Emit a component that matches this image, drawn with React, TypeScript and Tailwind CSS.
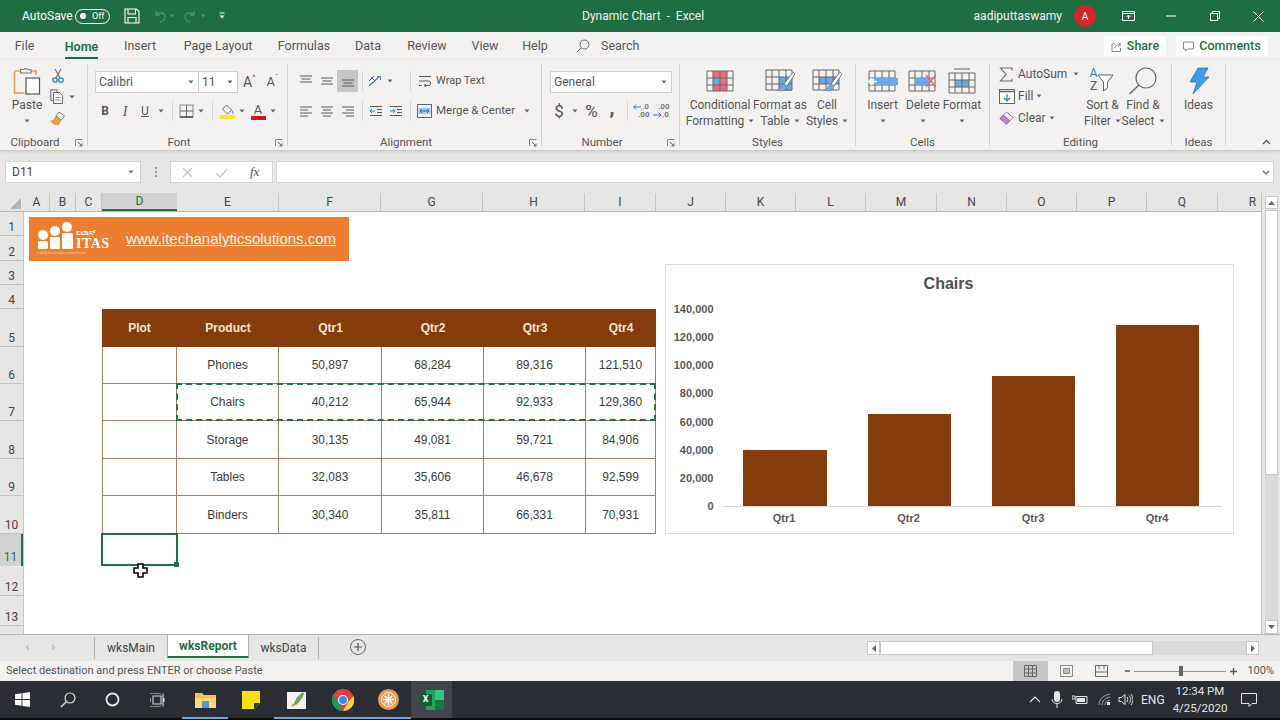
import React from "react";

type Kids = { children?: React.ReactNode };
const S = ({ w, h, children, className }: { w: number; h: number; children?: React.ReactNode; className?: string }) => (
  <svg width={w} height={h} viewBox={`0 0 ${w} ${h}`} fill="none" className={className}>{children}</svg>
);
const G = "#5a5a5a";
const Caret = ({ c = "#666" }: { c?: string }) => <S w={6} h={4}><path d="M0.5 0.5h5L3 3.5z" fill={c} /></S>;
const Cell = ({ w, children }: { w: number; children?: React.ReactNode }) => (
  <div style={{ width: w }} className="flex-none h-full flex items-center justify-center">{children}</div>
);
const Sep = ({ w = 9 }: { w?: number }) => (
  <div style={{ width: w }} className="flex-none h-full flex items-center justify-center"><div className="w-px h-[20px] bg-[#d4d4d4]" /></div>
);
const Launcher = () => (
  <S w={8} h={8}><path d="M0.5 7V0.5H7.5" stroke="#8a8a8a" /><path d="M3 3l4 4M7 4.5V7H4.5" stroke="#666" /></S>
);
const Group = ({ w, label, launcher, children }: Kids & { w: number; label: string; launcher?: boolean }) => (
  <div style={{ width: w }} className="flex-none h-[82px] mt-[4px] border-r border-[#cfcfcf] flex flex-col">
    <div className="h-[74px] flex-none min-h-0">{children}</div>
    <div className={launcher ? "relative h-[8px] flex-none flex items-center justify-center text-[11.500px] leading-[13px] text-[#555] pr-[17px]" : "relative h-[8px] flex-none flex items-center justify-center text-[11.500px] leading-[13px] text-[#555]"}>
      <span>{label}</span>
      {launcher && <span className="absolute right-[4px] top-[1px] flex"><Launcher /></span>}
    </div>
  </div>
);
const Big = ({ w, icon, l1, l2, caret }: { w: number; icon: React.ReactNode; l1: string; l2?: string; caret?: boolean }) => (
  <div style={{ width: w }} className="flex-none flex flex-col items-center">
    <div className="h-[34px] flex items-center justify-center">{icon}</div>
    <div className="h-[15px] leading-[15px] whitespace-nowrap">{l1}</div>
    <div className="h-[15px] flex items-center gap-[4px] whitespace-nowrap leading-[14px]">
      {l2 && <span>{l2}</span>}
      {caret && <Caret />}
    </div>
  </div>
);

/* ribbon drawings */
const PasteI = () => (
  <S w={28} h={30}>
    <path d="M8 5H2.500a1 1 0 0 0-1 1V27h10" stroke="#e2a24f" strokeWidth="1.600" />
    <path d="M18 5h5v4" stroke="#e2a24f" strokeWidth="1.600" />
    <path d="M7.500 7V3.500h3.500a2 2 0 0 1 3.500 0h3.500V7z" stroke="#777" fill="#f3f2f1" strokeWidth="1.100" />
    <rect x="13" y="12" width="13.500" height="16" fill="#fff" stroke="#555" strokeWidth="1.200" />
  </S>
);
const CutI = () => (
  <S w={12} h={15}>
    <path d="M3 1l5 9M9 1L4 10" stroke="#666" strokeWidth="1.100" />
    <circle cx="3" cy="12" r="2.200" stroke="#2f7cc4" strokeWidth="1.300" />
    <circle cx="9" cy="12" r="2.200" stroke="#2f7cc4" strokeWidth="1.300" />
  </S>
);
const CopyI = () => (
  <S w={15} h={15}>
    <path d="M3 11.500H.8V.8H7V3" stroke="#666" />
    <path d="M3.500 3.500h6l3 3v8h-9z" stroke="#666" fill="#f7f7f7" />
    <path d="M5.500 8.500h5M5.500 11h5" stroke="#888" />
  </S>
);
const PainterI = () => (
  <S w={16} h={15}>
    <path d="M9 1l5.500 4-3 4-5.500-4z" fill="#fff" stroke="#777" />
    <path d="M6 5l5 4-2.500 5C5 14 2 12 .8 10c2 0 4-1 5.200-5z" fill="#e7a14b" stroke="#c98530" strokeWidth=".7" />
  </S>
);
const Lines = ({ kind, y = 2 }: { kind: "l" | "c" | "r"; y?: number }) => {
  const short = kind === "l" ? "M1 XH9" : kind === "c" ? "M3 XH11" : "M5 XH13";
  return (
    <S w={14} h={13}>
      <path d={`M1 ${y}H13`} stroke={G} />
      <path d={short.replace("X", String(y + 3))} stroke={G} />
      <path d={`M1 ${y + 6}H13`} stroke={G} />
      <path d={short.replace("X", String(y + 9))} stroke={G} />
    </S>
  );
};
const VA = ({ at }: { at: number }) => (
  <S w={14} h={14}>
    <path d={`M1 ${at}H13M2.500 ${at + 3}H11.500M1 ${at + 6}H13`} stroke={G} />
  </S>
);
const OrientI = () => (
  <S w={16} h={14}>
    <path d="M1 12L11 3" stroke="#2f7cc4" strokeWidth="1.200" />
    <path d="M9 2.500h3.500V6" stroke="#2f7cc4" />
    <path d="M1 7l5-5M3 3l4 4" stroke={G} />
  </S>
);
const Indent = ({ out }: { out?: boolean }) => (
  <S w={14} h={12}>
    <path d="M1 1.500H13M8 4.500H13M8 7.500H13M1 10.500H13" stroke={G} />
    <path d={out ? "M6 6H1M3 4L1 6l2 2" : "M1 6h5M4 4l2 2-2 2"} stroke="#2f7cc4" />
  </S>
);
const BordersI = () => (
  <S w={15} h={14}>
    <rect x="1" y="1" width="13" height="12" stroke="#888" />
    <path d="M7.500 1v12M1 7h13" stroke="#666" />
    <path d="M1 13h13" stroke="#444" strokeWidth="1.400" />
  </S>
);
const FillI = () => (
  <div className="flex flex-col items-center">
    <S w={14} h={11}><path d="M6.500 1l5 5-4 4-5-5z" fill="#fff" stroke="#666" /><path d="M12 6.500c1 1.500 1.500 2.500.5 3.500" stroke="#2f7cc4" /></S>
    <div className="w-[15px] h-[4px] bg-[#f4ea2a]" />
  </div>
);
const WrapI = () => (
  <S w={14} h={14}>
    <path d="M1 2.500H13M1 7H10.500a2 2 0 0 1 0 4.500H6" stroke={G} />
    <path d="M8 10L6 11.500 8 13" stroke="#2f7cc4" />
    <path d="M1 11.500H4" stroke={G} />
  </S>
);
const MergeI = () => (
  <S w={15} h={14}>
    <rect x=".5" y=".5" width="14" height="13" stroke="#4a6a8a" />
    <rect x="1.500" y="4" width="12" height="6" fill="#9fc8ee" />
    <path d="M3 7h9M5 5L3 7l2 2M10 5l2 2-2 2" stroke="#2f6fb0" />
  </S>
);
const IncDec = ({ dec }: { dec?: boolean }) => (
  <div className="relative w-[18px] h-[16px] text-[8px] leading-[8px] text-[#777] font-bold">
    <span className="absolute left-[0px] top-[0px] flex">
      {dec ? <span className="pl-[6px]">.00</span> : <S w={18} h={8}><path d="M9 4H1.500M4 1.500L1.500 4 4 6.500" stroke="#2f7cc4" /></S>}
    </span>
    {!dec && <span className="absolute left-[10px] top-[0px]">.0</span>}
    <span className="absolute left-[0px] top-[8px] flex">
      {dec ? <S w={18} h={8}><path d="M1 4h8M6.500 1.500L9 4 6.500 6.500" stroke="#2f7cc4" /></S> : <span className="pl-[6px]">.00</span>}
    </span>
    {dec && <span className="absolute left-[10px] top-[8px]">.0</span>}
  </div>
);
const TableLines = () => <path d="M1 1h26v20H1zM1 8h26M1 15h26M7 1v20M14 1v20M21 1v20" stroke="#666" fill="none" />;
const CondI = () => (
  <S w={28} h={22}>
    <rect x="7" y="1" width="14" height="7" fill="#f4687a" />
    <rect x="7" y="15" width="14" height="6" fill="#f4687a" />
    <rect x="14" y="8" width="7" height="7" fill="#f4687a" />
    <rect x="7" y="8" width="7" height="7" fill="#6aa9e6" />
    <TableLines />
  </S>
);
const Brush = () => (
  <>
    <path d="M28 3L19 15l3 2 8-12z" fill="#fff" stroke="#7a7a7a" />
    <path d="M19 15c-3 1-3 5-7 6 4 2 9 1 10-4z" fill="#79a9d9" stroke="#5a87b5" strokeWidth=".6" />
  </>
);
const FormatTableI = () => (
  <S w={31} h={24}>
    <rect x="14" y="8" width="13" height="14" fill="#6aa9e6" />
    <TableLines />
    <Brush />
  </S>
);
const CellStylesI = () => (
  <S w={31} h={24}>
    <rect x="7" y="8" width="20" height="7" fill="#6aa9e6" />
    <TableLines />
    <Brush />
  </S>
);
const InsertI = () => (
  <S w={30} h={22}>
    <TableLines />
    <rect x="6" y="8" width="24" height="7" fill="#6aa9e6" />
    <path d="M9 11.500H1M4 8L.8 11.500 4 15" stroke="#fff" strokeWidth="1.500" />
  </S>
);
const DeleteI = () => (
  <S w={30} h={22}>
    <TableLines />
    <rect x="7" y="8" width="14" height="7" fill="#6aa9e6" />
    <path d="M18 5l10 12M28 5L18 17" stroke="#e5616b" strokeWidth="1.300" />
  </S>
);
const FormatI = () => (
  <S w={28} h={26}>
    <path d="M6 1h16" stroke="#666" />
    <g transform="translate(0 4)"><rect x="7" y="8" width="14" height="7" fill="#6aa9e6" /><TableLines /></g>
  </S>
);
const SigmaI = () => <S w={14} h={15}><path d="M13 3.500V1H1.500L7 7.500 1.500 14H13v-2.500" stroke="#666" strokeWidth="1.100" /></S>;
const FillDownI = () => (
  <S w={16} h={15}>
    <rect x=".5" y=".5" width="15" height="14" fill="#fff" stroke="#666" />
    <path d="M.5 2.500h15" stroke="#666" strokeWidth="1.500" />
    <path d="M8 5v7M5 9l3 3 3-3" stroke="#2f7cc4" strokeWidth="1.200" />
  </S>
);
const EraserI = () => (
  <S w={15} h={14}>
    <path d="M1 7.500L7.500 1 14 6.500 7.500 13z" fill="#fff" stroke="#a65fb5" />
    <path d="M1 7.500L4.500 4 11 10l-3.500 3z" fill="#c77fd6" stroke="#a65fb5" />
  </S>
);
const SortI = () => (
  <div className="flex items-start">
    <div className="flex flex-col items-center text-[12px] leading-[13px]">
      <span className="text-[#2f7cc4]">A</span>
      <span className="text-[#555]">Z</span>
    </div>
    <S w={18} h={22} className="mt-[6px]"><path d="M1 2h15l-5.500 7v6l-4 3V9z" stroke="#666" fill="#fff" /></S>
  </div>
);
const FindI = () => (
  <S w={30} h={30}>
    <circle cx="18" cy="12" r="10" stroke="#666" strokeWidth="1.200" />
    <path d="M11 19L1.500 28" stroke="#666" strokeWidth="1.300" />
  </S>
);
const BoltI = () => (
  <S w={22} h={28}>
    <path d="M10 1h10l-5 9h6L5 27l4-12H2z" fill="#3f9ae8" stroke="#2a78c0" strokeWidth=".8" />
  </S>
);

const columns: [string, number, boolean?][] = [
  ["A", 26], ["B", 26], ["C", 26], ["D", 75, true], ["E", 102], ["F", 102], ["G", 102], ["H", 102], ["I", 71],
  ["J", 70], ["K", 70], ["L", 70], ["M", 71], ["N", 70], ["O", 70], ["P", 70], ["Q", 71], ["R", 70],
];
const rowsH: [string, number, boolean?][] = [
  ["1", 24], ["2", 25], ["3", 24], ["4", 24], ["5", 38], ["6", 37], ["7", 37], ["8", 38], ["9", 37], ["10", 38],
  ["11", 32, true], ["12", 30], ["13", 30],
];
const tableRows: { h: number; v: string[] }[] = [
  { h: 37, v: ["", "Phones", "50,897", "68,284", "89,316", "121,510"] },
  { h: 37, v: ["", "Chairs", "40,212", "65,944", "92,933", "129,360"] },
  { h: 38, v: ["", "Storage", "30,135", "49,081", "59,721", "84,906"] },
  { h: 37, v: ["", "Tables", "32,083", "35,606", "46,678", "92,599"] },
  { h: 38, v: ["", "Binders", "30,340", "35,811", "66,331", "70,931"] },
];
const tabs: [string, number, boolean?][] = [
  ["File", 49], ["Home", 65, true], ["Insert", 52], ["Page Layout", 104], ["Formulas", 68], ["Data", 60], ["Review", 58], ["View", 58], ["Help", 42],
];

const Chart = () => {
  const bars = [
    { x: 78, w: 84, y: 186, l: "Qtr1", c: 119 },
    { x: 203, w: 83, y: 150, l: "Qtr2", c: 243.500 },
    { x: 327, w: 83, y: 112, l: "Qtr3", c: 368 },
    { x: 451, w: 83, y: 61, l: "Qtr4", c: 492 },
  ];
  const ticks = ["140,000", "120,000", "100,000", "80,000", "60,000", "40,000", "20,000", "0"];
  return (
    <svg width="569" height="270" viewBox="0 0 569 270" className="block" style={{ fontFamily: "'Liberation Sans', Arial, sans-serif" }}>
      <rect x=".5" y=".5" width="568" height="269" fill="#fff" stroke="#dedede" />
      <text x="283.500" y="25" textAnchor="middle" fontSize="16" fontWeight="700" fill="#505050">Chairs</text>
      {ticks.map((t, i) => (
        <text key={t} x="48.500" y={49 + i * 28.140} textAnchor="end" fontSize="11" fontWeight="700" fill="#595959">{t}</text>
      ))}
      <path d="M58 242.500H557" stroke="#d9d9d9" />
      {bars.map((b) => (
        <g key={b.l}>
          <rect x={b.x} y={b.y} width={b.w} height={242 - b.y} fill="#843c0c" />
          <text x={b.c} y="258" textAnchor="middle" fontSize="11" fontWeight="700" fill="#595959">{b.l}</text>
        </g>
      ))}
    </svg>
  );
};

export default function App() {
  return (
    <div className="w-[1280px] h-[720px] overflow-hidden flex flex-col bg-[#f3f2f1] font-['Roboto',sans-serif] text-[12px] text-[#444]">
      {/* Title bar */}
      <div className="h-[32px] flex-none bg-[#1f6e43] flex items-center text-white">
        <div className="w-[22px] flex-none" />
        <span className="text-[12px] w-[53px] flex-none whitespace-nowrap">AutoSave</span>
        <div className="w-[35px] h-[15px] flex-none rounded-full border border-white flex items-center pl-[4px] gap-[6px]">
          <span className="w-[6px] h-[6px] rounded-full bg-white" />
          <span className="text-[9px] leading-none">Off</span>
        </div>
        <div className="ml-[14px] flex-none flex">
          <S w={16} h={16}><path d="M1 1h11.500L15 3.500V15H1zM4 1v5h7.500V1M4 15V9.500h8V15" stroke="#fff" strokeWidth="1.100" /></S>
        </div>
        <div className="ml-[13px] flex-none flex items-center gap-[3px] opacity-40">
          <S w={13} h={13}><path d="M3 1v4h4M3 5c2-3 9-3 9 2 0 3-3 5-5 5" stroke="#9fc5ae" strokeWidth="1.300" /></S>
          <Caret c="#9fc5ae" />
        </div>
        <div className="ml-[9px] flex-none flex items-center gap-[3px] opacity-40">
          <S w={13} h={13}><path d="M10 1v4H6M10 5C8 2 1 2 1 7c0 3 3 5 5 5" stroke="#9fc5ae" strokeWidth="1.300" /></S>
          <Caret c="#9fc5ae" />
        </div>
        <div className="ml-[13px] flex-none flex">
          <S w={6} h={8}><path d="M.5 1h5" stroke="#fff" /><path d="M.5 3.500h5L3 6.500z" fill="#fff" /></S>
        </div>
        <div className="w-[357px] flex-none" />
        <span className="w-[116px] flex-none text-center whitespace-pre text-[#f2f2f2]">Dynamic Chart  -  Excel</span>
        <div className="flex-1" />
        <span className="whitespace-nowrap text-[12px] text-[#f2f2f2] -ml-[6px]">aadiputtaswamy</span>
        <div className="ml-[12px] w-[22px] h-[22px] rounded-full bg-[#d1262c] flex items-center justify-center text-[10px]">A</div>
        <div className="ml-[26px] flex">
          <S w={13} h={10}><path d="M.5.500h12v9H.5zM.5 2.500h12M6.500 8V4M4.500 6l2-2 2 2" stroke="#fff" /></S>
        </div>
        <div className="ml-[31px] flex"><S w={10} h={2}><path d="M0 1h10" stroke="#fff" /></S></div>
        <div className="ml-[34px] flex"><S w={10} h={10}><path d="M.5 2.500h7v7h-7zM2.500 2.500V.5h7v7h-2" stroke="#fff" /></S></div>
        <div className="ml-[33px] mr-[16px] flex"><S w={11} h={11}><path d="M.5.500l10 10M10.500.5L.5 10.500" stroke="#fff" /></S></div>
      </div>

      {/* Tabs */}
      <div className="h-[28px] flex-none flex items-center text-[12.500px] text-[#555]">
        {tabs.map(([t, w, on]) => (
          <div key={t} style={{ width: w }} className="flex-none h-full flex items-center justify-center relative">
            <span className={on ? "font-semibold text-[#1f6e43] border-b-[2.500px] border-[#1f6e43] h-[24px] mt-[2px] leading-[24px]" : ""}>{t}</span>
          </div>
        ))}
        <div className="ml-[20px] flex"><S w={14} h={14}><circle cx="8.500" cy="5.500" r="4.500" stroke="#666" /><path d="M5 9L1 13" stroke="#666" /></S></div>
        <span className="ml-[11px]">Search</span>
        <div className="flex-1" />
        <div className="h-[20px] w-[62px] bg-white flex items-center justify-center gap-[5px] text-[#1f6e43] font-medium">
          <S w={11} h={11}><path d="M4 3H1v7.500h8.500V7M3.500 7.500C4 5 6 3.500 9 3.500M7 1l3 2.500L7 6" stroke="#888" /></S>
          <span>Share</span>
        </div>
        <div className="ml-[10px] mr-[12px] h-[20px] w-[92px] bg-white flex items-center justify-center gap-[5px] text-[#1f6e43] font-medium">
          <S w={11} h={11}><path d="M.5 1h10v7H4.500L2.500 10V8h-2z" stroke="#888" /></S>
          <span>Comments</span>
        </div>
      </div>

      {/* Ribbon */}
      <div className="h-[90px] flex-none flex items-start shadow-[0_1px_3px_rgba(0,0,0,0.18)] relative z-10 text-[12px] text-[#555]">
        <Group w={88} label="Clipboard" launcher>
          <div className="flex h-full pl-[5px]">
            <Big w={44} icon={<PasteI />} l1="Paste" caret />
            <div className="flex flex-col pl-[1px]">
              <div className="h-[22px] flex items-center pl-[2px]"><CutI /></div>
              <div className="h-[21px] flex items-center gap-[4px]"><CopyI /><Caret /></div>
              <div className="h-[22px] flex items-center"><PainterI /></div>
            </div>
          </div>
        </Group>

        <Group w={200} label="Font" launcher>
          <div className="pl-[7px] pt-[7px]">
            <div className="flex h-[22px]">
              <div className="w-[104px] border border-[#cfcfcf] bg-white flex items-center justify-between pl-[3px] pr-[4px]"><span className="text-[12px]">Calibri</span><Caret /></div>
              <div className="w-[40px] -ml-px border border-[#cfcfcf] bg-white flex items-center justify-between pl-[3px] pr-[4px]"><span>11</span><Caret /></div>
              <div className="flex items-center ml-[5px] gap-[11px] text-[14px]">
                <span className="flex items-start">A<span className="text-[8px] leading-[12px]">^</span></span>
                <span className="flex items-start text-[13px]">A<span className="text-[8px] leading-[12px]">ˇ</span></span>
              </div>
            </div>
            <div className="flex h-[22px] mt-[7px] font-['Liberation_Serif',serif]">
              <Cell w={20}><span className="font-['Roboto',sans-serif] font-bold text-[12px]">B</span></Cell>
              <Cell w={20}><span className="italic text-[14px]">I</span></Cell>
              <Cell w={20}><span className="font-['Roboto',sans-serif] underline text-[12px]">U</span></Cell>
              <Cell w={12}><Caret /></Cell>
              <Sep w={11} />
              <Cell w={16}><BordersI /></Cell>
              <Cell w={14}><Caret /></Cell>
              <Sep w={9} />
              <Cell w={20}><FillI /></Cell>
              <Cell w={10}><Caret /></Cell>
              <Cell w={22}>
                <div className="flex flex-col items-center font-['Roboto',sans-serif] text-[13px] leading-[13px]">
                  <span>A</span><span className="w-[15px] h-[4px] bg-[#d8121d]" />
                </div>
              </Cell>
              <Cell w={8}><Caret /></Cell>
            </div>
          </div>
        </Group>

        <Group w={254} label="Alignment" launcher>
          <div className="pl-[7px] pt-[6px]">
            <div className="flex h-[22px]">
              <Cell w={21}><VA at={2} /></Cell>
              <Cell w={21}><VA at={4} /></Cell>
              <Cell w={21}><div className="w-[21px] h-[22px] bg-[#c6c6c6] flex items-center justify-center"><VA at={6} /></div></Cell>
              <Sep w={8} />
              <Cell w={20}><OrientI /></Cell>
              <Cell w={8}><Caret /></Cell>
              <div className="w-[12px]" />
              <Sep w={8} />
              <Cell w={21}><WrapI /></Cell>
              <span className="self-center ml-[1px] text-[11px] whitespace-nowrap">Wrap Text</span>
            </div>
            <div className="flex h-[22px] mt-[8px]">
              <Cell w={21}><Lines kind="l" /></Cell>
              <Cell w={21}><Lines kind="c" /></Cell>
              <Cell w={21}><Lines kind="r" /></Cell>
              <Sep w={8} />
              <Cell w={20}><Indent out /></Cell>
              <Cell w={20}><Indent /></Cell>
              <Sep w={8} />
              <Cell w={21}><MergeI /></Cell>
              <span className="self-center ml-[1px] text-[11.500px] whitespace-nowrap">Merge &amp; Center</span>
              <span className="self-center ml-[9px] flex"><Caret /></span>
            </div>
          </div>
        </Group>

        <Group w={138} label="Number" launcher>
          <div className="pl-[8px] pt-[7px]">
            <div className="w-[122px] h-[22px] border border-[#cfcfcf] bg-white flex items-center justify-between pl-[3px] pr-[4px] text-[12px]"><span>General</span><Caret /></div>
            <div className="flex h-[22px] mt-[7px]">
              <Cell w={18}><span className="text-[17px] leading-none">$</span></Cell>
              <Cell w={14}><Caret /></Cell>
              <Cell w={19}><span className="text-[17px] leading-none">%</span></Cell>
              <Cell w={22}><span className="text-[20px] font-bold leading-none -mt-[8px]">,</span></Cell>
              <Sep w={8} />
              <Cell w={20}><IncDec /></Cell>
              <Cell w={20}><IncDec dec /></Cell>
            </div>
          </div>
        </Group>

        <Group w={176} label="Styles">
          <div className="flex">
            <Big w={80} icon={<CondI />} l1="Conditional" l2="Formatting" caret />
            <Big w={40} icon={<FormatTableI />} l1="Format as" l2="Table" caret />
            <Big w={54} icon={<CellStylesI />} l1="Cell" l2="Styles" caret />
          </div>
        </Group>

        <Group w={134} label="Cells">
          <div className="flex">
            <Big w={53} icon={<InsertI />} l1="Insert" caret />
            <Big w={28} icon={<DeleteI />} l1="Delete" caret />
            <Big w={50} icon={<FormatI />} l1="Format" caret />
          </div>
        </Group>

        <Group w={182} label="Editing">
          <div className="flex">
            <div className="w-[92px] flex-none flex flex-col gap-[2px] pl-[9px]">
              <div className="h-[20px] flex items-center"><span className="w-[19px] flex"><SigmaI /></span><span>AutoSum</span><span className="ml-[6px] flex"><Caret /></span></div>
              <div className="h-[20px] flex items-center"><span className="w-[19px] flex"><FillDownI /></span><span>Fill</span><span className="ml-[3px] flex"><Caret /></span></div>
              <div className="h-[20px] flex items-center"><span className="w-[19px] flex"><EraserI /></span><span>Clear</span><span className="ml-[3px] flex"><Caret /></span></div>
            </div>
            <Big w={41} icon={<SortI />} l1="Sort &" l2="Filter" caret />
            <Big w={40} icon={<FindI />} l1="Find &" l2="Select" caret />
          </div>
        </Group>

        <Group w={54} label="Ideas">
          <Big w={53} icon={<BoltI />} l1="Ideas" />
        </Group>

        <div className="flex-1 h-[82px] mt-[4px] flex items-end justify-end pr-[9px] pb-[1px]">
          <S w={9} h={6}><path d="M1 5l3.500-3.500L8 5" stroke="#555" strokeWidth="1.300" /></S>
        </div>
      </div>

      {/* Formula bar */}
      <div className="h-[43px] flex-none bg-[#e6e6e4] flex items-start pt-[11px]">
        <div className="ml-[5px] w-[136px] h-[22px] bg-white border border-[#d4d4d4] flex items-center justify-between pl-[6px] pr-[6px]"><span className="text-[12px]">D11</span><Caret /></div>
        <div className="w-[29px] h-[22px] flex flex-col items-center justify-center gap-[2px]">
          <span className="w-[2px] h-[2px] bg-[#999]" /><span className="w-[2px] h-[2px] bg-[#999]" /><span className="w-[2px] h-[2px] bg-[#999]" />
        </div>
        <div className="w-[103px] h-[22px] bg-white border border-[#d4d4d4] flex items-center pl-[11px] gap-[22px]">
          <S w={11} h={11}><path d="M1 1l9 9M10 1l-9 9" stroke="#c4c4c4" strokeWidth="1.300" /></S>
          <S w={13} h={11}><path d="M1 6l4 4 7-8" stroke="#c4c4c4" strokeWidth="1.300" /></S>
          <span className="font-['Liberation_Serif',serif] italic text-[13px] text-[#555]">fx</span>
        </div>
        <div className="ml-[3px] w-[998px] h-[22px] bg-white border border-[#d4d4d4] flex items-center justify-end pr-[3px]">
          <S w={8} h={5}><path d="M1 1l3 3 3-3" stroke="#666" strokeWidth="1.200" /></S>
        </div>
      </div>

      {/* Sheet */}
      <div className="h-[441px] flex-none flex">
        <div className="w-[1261px] flex-none flex flex-col">
          <div className="h-[19px] flex-none flex overflow-hidden bg-[#e6e6e4] border-b border-[#b5b5b5]">
            <div className="w-[24px] flex-none flex items-end justify-end pr-[3px] pb-[2px]">
              <S w={11} h={11}><path d="M11 0v11H0z" fill="#b4b4b4" /></S>
            </div>
            {columns.map(([c, w, on]) => (
              <div key={c} style={{ width: w }} className={on ? "flex-none flex items-center justify-center text-[12px] bg-[#d2d2d2] border-b-2 border-[#217346] text-[#1f6e43]" : "flex-none flex items-center justify-center text-[12px] border-r border-[#c4c4c4]"}>{c}</div>
            ))}
          </div>
          <div className="flex-1 flex min-h-0">
            <div className="w-[24px] flex-none flex flex-col bg-[#e6e6e4] border-r border-[#c4c4c4] overflow-hidden">
              {rowsH.map(([r, h, on]) => (
                <div key={r} style={{ height: h }} className={on ? "flex-none flex items-end justify-center leading-[16px] pb-[1px] bg-[#d2d2d2] border-r-2 border-[#217346] text-[#1f6e43]" : "flex-none flex items-end justify-center leading-[16px] border-b border-[#c4c4c4]"}>{r}</div>
              ))}
            </div>
            <div className="relative flex-1 bg-white flex items-start overflow-hidden">
              <div className="w-[632px] flex-none">
                <div className="ml-[5px] mt-[5px] w-[320px] h-[44px] bg-[#ed7d31] flex items-center text-white">
                  <div className="w-[97px] flex-none pl-[8px] flex flex-col">
                    <div className="flex items-end">
                      <S w={37} h={27}>
                        <circle cx="6" cy="13" r="5" fill="#fff" /><rect x="1" y="19" width="10" height="8" rx="1.500" fill="#fff" />
                        <circle cx="18" cy="9" r="5" fill="#fff" /><rect x="13" y="15" width="10" height="12" rx="1.500" fill="#fff" />
                        <circle cx="30" cy="5" r="5" fill="#fff" /><rect x="25" y="11" width="11" height="16" rx="1.500" fill="#fff" />
                      </S>
                      <div className="ml-[2px] flex flex-col">
                        <span className="text-[8px] leading-[12px] font-['Noto_Sans',sans-serif] whitespace-nowrap">ಐಟಾಸ್</span>
                        <span className="text-[14px] leading-[11px] font-bold font-['Liberation_Serif',serif] tracking-[0.5px]">ITAS</span>
                      </div>
                    </div>
                    <span className="text-[3.500px] leading-[6px] whitespace-nowrap text-[#f8d3b8] mt-[1px]">quality knowledge commitment</span>
                  </div>
                  <span className="font-['Liberation_Sans',Arial,sans-serif] text-[15px] underline whitespace-nowrap text-[#fdf0e6]">www.itechanalyticsolutions.com</span>
                </div>

                <div className="relative ml-[78px] mt-[48px] w-[554px] font-['Liberation_Sans',Arial,sans-serif] text-[12px] text-[#3c3c3c]">
                  <div className="grid grid-cols-[75px_102px_103px_102px_102px_70px] h-[38px] bg-[#843c0c] text-[#f7e6d8] font-bold items-center text-center">
                    <span>Plot</span><span>Product</span><span>Qtr1</span><span>Qtr2</span><span>Qtr3</span><span>Qtr4</span>
                  </div>
                  {tableRows.map((r) => (
                    <div key={r.v[1]} style={{ height: r.h }} className="grid grid-cols-[74px_102px_103px_102px_102px_70px] border-b border-l border-[#a87c5f] text-center">
                      {r.v.map((c, i) => (
                        <div key={i} className="flex items-center justify-center border-r border-[#a87c5f]">{c}</div>
                      ))}
                    </div>
                  ))}
                  <div className="absolute left-[74px] top-[74px] w-[480px] h-[38px] border-2 border-dashed border-[#217346]" />
                  <div className="relative -ml-px -mt-px w-[77px] h-[33px] border-2 border-[#217346]">
                    <span className="absolute -right-[3px] -bottom-[3px] w-[5px] h-[5px] bg-[#217346]" />
                    <span className="absolute left-[30px] top-[28px] flex">
                      <S w={15} h={15}><path d="M5 1h5v4h4v5h-4v4H5v-4H1V5h4z" fill="#fff" stroke="#000" strokeWidth="1.500" /></S>
                    </span>
                  </div>
                </div>
              </div>
              <div className="ml-[9px] mt-[52px] flex-none"><Chart /></div>
            </div>
          </div>
        </div>
        <div className="flex-1 bg-[#e6e6e4] flex flex-col items-center pt-[3px] border-l border-[#c4c4c4]">
          <div className="w-[13px] h-[13px] bg-white border border-[#c8c8c8] flex items-center justify-center"><S w={7} h={4}><path d="M3.500 0L7 4H0z" fill="#666" /></S></div>
          <div className="w-[13px] h-[265px] mt-[1px] bg-white border border-[#c8c8c8]" />
          <div className="w-[13px] flex-1 bg-[#dadada]" />
          <div className="w-[13px] h-[14px] bg-white border border-[#c8c8c8] flex items-center justify-center"><S w={7} h={4}><path d="M0 0h7L3.500 4z" fill="#666" /></S></div>
        </div>
      </div>

      {/* Sheet tabs */}
      <div className="h-[27px] flex-none bg-[#e6e6e4] border-t border-[#b5b5b5] flex items-start">
        <div className="w-[94px] flex-none h-[25px] flex items-center pl-[25px] gap-[23px]">
          <S w={4} h={7}><path d="M4 0v7L0 3.500z" fill="#c4c4c4" /></S>
          <S w={4} h={7}><path d="M0 0v7l4-3.500z" fill="#c4c4c4" /></S>
        </div>
        <div className="w-[73px] flex-none h-[22px] border-l border-[#b5b5b5] mt-[2px] flex items-center justify-center">wksMain</div>
        <div className="w-[82px] flex-none h-[23px] bg-white border-b-2 border-[#217346] border-x border-x-[#b5b5b5] flex items-center justify-center font-bold text-[#1f6e43]">wksReport</div>
        <div className="w-[70px] flex-none h-[22px] mt-[2px] border-r border-[#b5b5b5] flex items-center justify-center">wksData</div>
        <div className="ml-[31px] mt-[4px] w-[16px] h-[16px] rounded-full border border-[#666] flex items-center justify-center">
          <S w={8} h={8}><path d="M4 0v8M0 4h8" stroke="#555" strokeWidth="1.200" /></S>
        </div>
        <div className="ml-auto mr-[21px] mt-[6px] w-[392px] h-[14px] flex">
          <div className="w-[13px] bg-white border border-[#c8c8c8] flex items-center justify-center"><S w={4} h={7}><path d="M4 0v7L0 3.500z" fill="#666" /></S></div>
          <div className="w-[273px] bg-white border border-[#c8c8c8]" />
          <div className="flex-1 bg-[#dadada]" />
          <div className="w-[13px] bg-white border border-[#c8c8c8] flex items-center justify-center"><S w={4} h={7}><path d="M0 0v7l4-3.500z" fill="#666" /></S></div>
        </div>
      </div>

      {/* Status bar */}
      <div className="h-[20px] flex-none flex items-center text-[11px] text-[#555] pl-[6px]">
        <span className="whitespace-nowrap">Select destination and press ENTER or choose Paste</span>
        <div className="flex-1" />
        <div className="w-[35px] h-[20px] bg-[#c6c6c6] flex items-center justify-center">
          <S w={13} h={12}><path d="M.5.500h12v11H.5zM.5 4h12M.5 8h12M4.500.5v11M8.500.5v11" stroke="#666" /></S>
        </div>
        <div className="ml-[12px] flex"><S w={13} h={12}><path d="M.5.500h12v11H.5zM3.500 3.500h6v5h-6zM3.500 5h6M3.500 7h6" stroke="#888" /></S></div>
        <div className="ml-[22px] flex"><S w={13} h={12}><path d="M.5.500h12v11H.5zM.5 7h12M4 .5V4M9 .5V4" stroke="#666" /></S></div>
        <div className="ml-[17px] flex"><S w={5} h={2}><path d="M0 1h5" stroke="#555" strokeWidth="1.500" /></S></div>
        <div className="ml-[4px] w-[92px] h-[10px] flex items-center relative">
          <div className="w-full h-px bg-[#999]" />
          <span className="absolute left-[45px] top-0 w-[4px] h-[10px] bg-[#666]" />
        </div>
        <div className="ml-[4px] flex"><S w={7} h={7}><path d="M3.500 0v7M0 3.500h7" stroke="#555" strokeWidth="1.300" /></S></div>
        <span className="ml-[7px] mr-[6px] w-[30px] text-right text-[11px]">100%</span>
      </div>

      {/* Taskbar */}
      <div className="flex-1 bg-[#2a2d33] flex items-center relative border-b-2 border-[#0c0c0c] text-white">
        <div className="w-[45px] flex justify-center">
          <S w={15} h={15}><path d="M0 2.200L6.500 1.300V7H0zM7.400 1.200L15 0v7H7.400zM0 8h6.500v5.700L0 12.800zM7.400 8H15v7l-7.600-1.100z" fill="#fff" /></S>
        </div>
        <div className="w-[45px] flex justify-center">
          <S w={16} h={16}><circle cx="10" cy="6" r="5" stroke="#d8d8d8" strokeWidth="1.200" /><path d="M6.500 9.500L1 15" stroke="#d8d8d8" strokeWidth="1.400" /></S>
        </div>
        <div className="w-[45px] flex justify-center">
          <S w={15} h={15}><circle cx="7.500" cy="7.500" r="6" stroke="#e8e8e8" strokeWidth="1.800" /></S>
        </div>
        <div className="w-[45px] mr-[2px] flex justify-center">
          <S w={16} h={14}><path d="M3 3h8v8H3zM0 5v4M14 5v4M13 .5v13M0 0h11M0 14h11" stroke="#d8d8d8" strokeWidth="1.100" /></S>
        </div>
        <div className="w-[46px] h-full flex justify-center items-center border-b-2 border-[#6ea6dc] -mb-[2px]">
          <S w={21} h={16}><path d="M0 1h7l2 2h12v13H0z" fill="#f3c34b" /><path d="M0 6h21v10H0z" fill="#fbd977" /><rect x="7" y="9" width="7" height="7" fill="#4d9bd6" /></S>
        </div>
        <div className="w-[46px] flex justify-center">
          <S w={18} h={18}><path d="M0 0h18v12l-6 6H0z" fill="#fbe011" /><path d="M12 12h6l-6 6z" fill="#333" /></S>
        </div>
        <div className="w-[46px] h-full flex justify-center items-center border-b-2 border-[#6ea6dc] -mb-[2px]">
          <S w={20} h={19}><rect y="2" width="19" height="17" fill="#f2f2f2" /><path d="M7 14c1-5 5-9 9-12l1 2c-2 4-4 8-8 11z" fill="#6aa84f" /><path d="M4 16c1-2 3-3 4-2s0 3-4 2z" fill="#e69a3c" /></S>
        </div>
        <div className="w-[46px] h-full flex justify-center items-center border-b-2 border-[#6ea6dc] -mb-[2px]">
          <S w={22} h={22}>
            <circle cx="11" cy="11" r="11" fill="#db4437" />
            <path d="M11 22a11 11 0 0 1-9.500-16.500L7 14z" fill="#0f9d58" />
            <path d="M11 22l5.500-9.500L21.500 7A11 11 0 0 1 11 22z" fill="#ffcd40" />
            <circle cx="11" cy="11" r="5" fill="#fff" /><circle cx="11" cy="11" r="4" fill="#4285f4" />
          </S>
        </div>
        <div className="w-[45px] h-full flex justify-center items-center border-b-2 border-[#6ea6dc] -mb-[2px]">
          <S w={21} h={21}>
            <circle cx="10.500" cy="10.500" r="10.500" fill="#ee9a4d" />
            <circle cx="10.500" cy="10.500" r="7" stroke="#fff" strokeWidth="1" />
            <path d="M10.500 5v11M5 10.500h11M6.700 6.700l7.600 7.600M14.300 6.700l-7.600 7.600" stroke="#fff" strokeWidth="1.500" />
          </S>
        </div>
        <div className="w-[41px] h-full bg-[#42464c] flex justify-center items-center">
          <div className="relative w-[24px] h-[20px]">
            <S w={24} h={20} className="absolute left-0 top-0"><path d="M6 0h18v20H6z" fill="#21a366" /><path d="M15 0h9v10h-9z" fill="#33c481" /><path d="M15 10h9v10h-9z" fill="#107c41" /></S>
            <span className="absolute left-0 top-[4px] w-[12px] h-[12px] bg-[#185c37] flex items-center justify-center text-[9px] font-bold leading-none">X</span>
          </div>
        </div>
        <div className="flex-1" />
        <div className="flex items-center text-[#e6e6e6]">
          <S w={12} h={7}><path d="M1 6l5-5 5 5" stroke="#e6e6e6" strokeWidth="1.200" /></S>
          <S w={12} h={18} className="ml-[10px]"><rect x="3" y="0" width="6" height="11" rx="3" fill="#e6e6e6" /><path d="M1 8c0 6 10 6 10 0M6 13v4" stroke="#e6e6e6" /></S>
          <S w={16} h={10} className="ml-[9px]"><path d="M4 1.500h11v7H4zM0 1h3v3H0z" stroke="#e6e6e6" /><rect x="5" y="3" width="8" height="4" fill="#e6e6e6" /></S>
          <S w={13} h={13} className="ml-[10px]"><path d="M1 12C1 6 6 2 12 1M4 12c0-4 3-7 8-8M7 12c0-3 2-4 5-5" stroke="#a9a9a9" /><rect x="9" y="9" width="3" height="3" fill="#e6e6e6" /></S>
          <S w={15} h={13} className="ml-[7px]"><path d="M1 4.500h2.500L7 1.500v10l-3.500-3H1zM9 4c1 1 1 4 0 5M11 2.500c2 2 2 6 0 8M13 1c2.500 3 2.500 8 0 11" stroke="#e6e6e6" /></S>
          <span className="ml-[8px] text-[12px] w-[24px] whitespace-nowrap">ENG</span>
          <div className="ml-[4px] w-[62px] flex flex-col items-center text-[11.500px] leading-[17px]">
            <span>12:34 PM</span><span>4/25/2020</span>
          </div>
          <S w={16} h={14} className="ml-[10px] mr-[23px]"><path d="M.5.500h15v10h-4.500l-3 3v-3H.5z" stroke="#e6e6e6" /></S>
        </div>
      </div>
    </div>
  );
}
